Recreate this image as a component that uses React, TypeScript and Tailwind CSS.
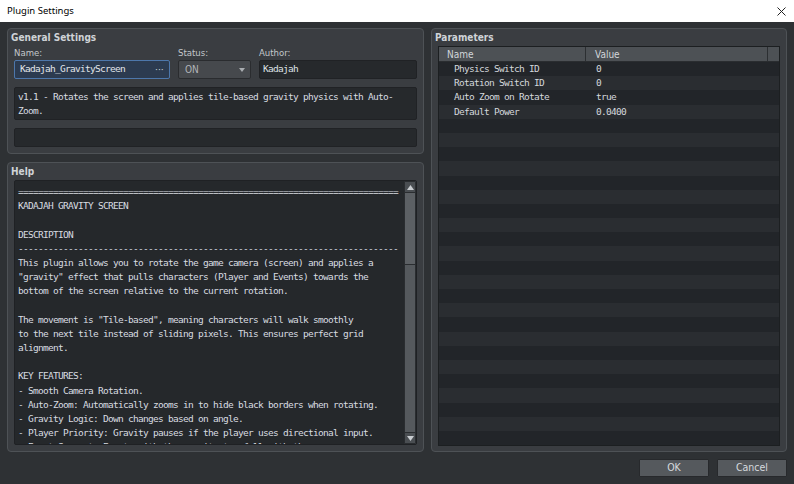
import React from 'react';

const ui = "font-['DejaVu_Sans_Condensed','DejaVu_Sans',sans-serif]";
const mono = "font-['DejaVu_Sans_Mono',monospace] text-[9.5px] tracking-[-0.72px]";

const helpLines = [
  '='.repeat(76),
  'KADAJAH GRAVITY SCREEN',
  '',
  'DESCRIPTION',
  '-'.repeat(76),
  'This plugin allows you to rotate the game camera (screen) and applies a',
  '"gravity" effect that pulls characters (Player and Events) towards the',
  'bottom of the screen relative to the current rotation.',
  '',
  'The movement is "Tile-based", meaning characters will walk smoothly',
  'to the next tile instead of sliding pixels. This ensures perfect grid',
  'alignment.',
  '',
  'KEY FEATURES:',
  '- Smooth Camera Rotation.',
  '- Auto-Zoom: Automatically zooms in to hide black borders when rotating.',
  '- Gravity Logic: Down changes based on angle.',
  '- Player Priority: Gravity pauses if the player uses directional input.',
  '- Event Support: Events with the gravity tag fall with the screen.',
];

const params = [
  { name: 'Physics Switch ID', value: '0' },
  { name: 'Rotation Switch ID', value: '0' },
  { name: 'Auto Zoom on Rotate', value: 'true' },
  { name: 'Default Power', value: '0.0400' },
];

const Panel = ({ title, className, children }: { title: string; className?: string; children: React.ReactNode }) => (
  <div className={`flex flex-col rounded-[4px] border border-[#4e5256] bg-[#3a3d41] ${className ?? ''}`}>
    <div className={`h-[17px] flex items-center px-[3px] text-[10px] font-bold text-[#cfd3d7] ${ui}`}>{title}</div>
    {children}
  </div>
);

const Label = ({ children }: { children: React.ReactNode }) => (
  <div className={`h-[14px] flex items-center text-[9.5px] text-[#c3c7cb] ${ui}`}>{children}</div>
);

const Arrow = ({ up }: { up?: boolean }) => (
  <div className="h-[12px] flex items-center justify-center bg-[#4a4e52] border border-[#2a2d30]">
    <svg width="7" height="5" viewBox="0 0 7 5">
      <path d={up ? 'M3.5 0 L7 5 L0 5 Z' : 'M0 0 L7 0 L3.5 5 Z'} fill="#c8ccd0" />
    </svg>
  </div>
);

export default function App() {
  return (
    <div className="w-[794px] h-[484px] bg-[#2e3134] flex flex-col overflow-hidden">
      {/* title bar */}
      <div className="h-[22px] bg-white flex items-center justify-between pl-[7px] pr-[8px]">
        <span className="text-[9.5px] text-black font-['Noto_Sans',sans-serif]">Plugin Settings</span>
        <svg width="9" height="9" viewBox="0 0 9 9">
          <path d="M0.5 0.5 L8.5 8.5 M8.5 0.5 L0.5 8.5" stroke="#222" strokeWidth="1" />
        </svg>
      </div>

      <div className="flex-1 flex flex-col px-[7px] pt-[6px]">
        <div className="flex gap-[7px] h-[424px]">
          {/* left column */}
          <div className="w-[417px] flex flex-col gap-[8px]">
            <Panel title="General Settings" className="h-[126px]">
              <div className="px-[6px] flex flex-col">
                <div className="grid grid-cols-[156px_73px_1fr] gap-x-[8px]">
                  <Label>Name:</Label>
                  <Label>Status:</Label>
                  <Label>Author:</Label>
                  <div className="h-[19px] rounded-[2px] border border-[#4d77ab] bg-[#2c3b50] flex items-center justify-between pl-[5px] pr-[5px]">
                    <span className={`${mono} text-[#e2e6ea]`}>Kadajah_GravityScreen</span>
                    <span className="text-[9px] text-[#c4c8cc] tracking-[0.5px] leading-none">···</span>
                  </div>
                  <div className="h-[19px] rounded-[2px] border border-[#2a2c2f] bg-[#46494d] flex items-center justify-between pl-[6px] pr-[5px]">
                    <span className={`text-[10px] text-[#b2b6ba] ${ui}`}>ON</span>
                    <svg width="6" height="4" viewBox="0 0 6 4">
                      <path d="M0 0 L6 0 L3 4 Z" fill="#a9adb1" />
                    </svg>
                  </div>
                  <div className="h-[19px] rounded-[2px] border border-[#202225] bg-[#26292c] flex items-center pl-[3px]">
                    <span className={`${mono} text-[#dde1e5]`}>Kadajah</span>
                  </div>
                </div>
                <div className={`mt-[8px] h-[33px] rounded-[2px] border border-[#202225] bg-[#26292c] pl-[3px] pt-[2px] leading-[14px] text-[#d8dce0] ${mono}`}>
                  <div>v1.1 - Rotates the screen and applies tile-based gravity physics with Auto-</div>
                  <div>Zoom.</div>
                </div>
                <div className="mt-[8px] h-[19px] rounded-[2px] border border-[#202225] bg-[#26292c]" />
              </div>
            </Panel>

            <Panel title="Help" className="flex-1">
              <div className="mx-[6px] h-[265px] rounded-[2px] border border-[#1f2124] bg-[#25282b] flex overflow-hidden">
                <div className={`flex-1 overflow-hidden pl-[3px] pt-[4px] leading-[14.2px] whitespace-pre text-[#d8dce0] ${mono}`}>
                  {helpLines.map((l, i) => (
                    <div key={i} className="h-[14.2px]">{l}</div>
                  ))}
                </div>
                <div className="w-[12px] flex flex-col bg-[#2a2d30]">
                  <Arrow up />
                  <div className="flex-1 flex flex-col bg-[#55595d] border-x border-[#2a2d30]">
                    <div className="h-[72px] bg-[#5c6064] border-b border-[#2a2d30]" />
                  </div>
                  <Arrow />
                </div>
              </div>
            </Panel>
          </div>

          {/* parameters */}
          <Panel title="Parameters" className="w-[356px]">
            <div className="mx-[6px] h-[400px] border border-[#1c1f21] bg-[#23262a] flex flex-col overflow-hidden">
              <div className={`h-[15px] flex bg-[#4d5155] border-b border-[#2a2d30] text-[10px] text-[#d2d6da] ${ui}`}>
                <div className="w-[147px] flex items-center pl-[8px] border-r border-[#2c2f32]">Name</div>
                <div className="w-[182px] flex items-center pl-[9px] border-r border-[#2c2f32]">Value</div>
                <div className="flex-1" />
              </div>
              <div className="flex-1 flex flex-col">
                {Array.from({ length: 28 }).map((_, i) => {
                  const p = params[i];
                  return (
                    <div
                      key={i}
                      className={`h-[14.2px] shrink-0 flex items-center text-[#d4d8dc] ${mono} ${i % 2 === 0 ? 'bg-[#222529]' : 'bg-[#2a2d31]'}`}
                    >
                      <div className="w-[147px] pl-[15px]">{p?.name}</div>
                      <div className="pl-[10px]">{p?.value}</div>
                    </div>
                  );
                })}
              </div>
            </div>
          </Panel>
        </div>

        {/* buttons */}
        <div className="flex justify-end gap-[8px] mt-[7px]">
          {['OK', 'Cancel'].map((b) => (
            <div
              key={b}
              className={`w-[70px] h-[18px] flex items-center justify-center rounded-[1px] border border-[#27292c] bg-[#55595d] text-[10.5px] text-[#d6dade] ${ui}`}
            >
              {b}
            </div>
          ))}
        </div>
      </div>
    </div>
  );
}
